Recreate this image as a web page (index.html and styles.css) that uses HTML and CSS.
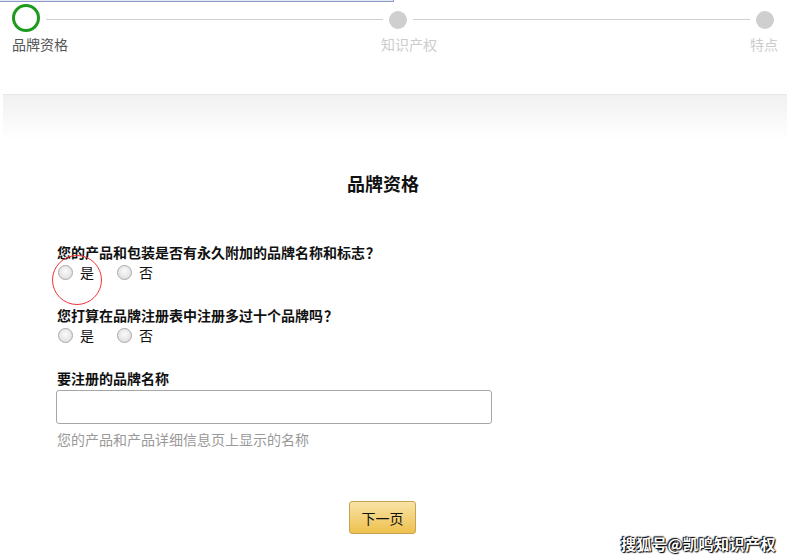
FILE: index.html
```html
<!DOCTYPE html>
<html lang="zh">
<head>
    <meta charset="UTF-8">
    <title>品牌资格</title>
    <link rel="stylesheet" href="styles.css">
</head>
<body>
    <div class="top-tab"></div>

    <!-- Steps -->
    <div class="steps">
        <div class="step-track">
            <span class="step-dot current"></span>
            <span class="step-line"></span>
            <span class="step-dot"></span>
            <span class="step-line"></span>
            <span class="step-dot"></span>
        </div>
        <div class="step-labels">
            <span class="step-label current">品牌资格</span>
            <span class="step-label">知识产权</span>
            <span class="step-label">特点</span>
        </div>
    </div>

    <div class="fade-band"></div>

    <div class="form">
        <h1 class="form-title">品牌资格</h1>

        <div class="form-body">
            <div class="question">
                <p class="question-text">您的产品和包装是否有永久附加的品牌名称和标志<span class="qmark">？</span></p>
                <div class="options">
                    <label class="option"><input type="radio" name="q1"> 是</label>
                    <label class="option"><input type="radio" name="q1"> 否</label>
                    <span class="mark"></span>
                </div>
            </div>

            <div class="question">
                <p class="question-text">您打算在品牌注册表中注册多过十个品牌吗<span class="qmark">？</span></p>
                <div class="options">
                    <label class="option"><input type="radio" name="q2"> 是</label>
                    <label class="option"><input type="radio" name="q2"> 否</label>
                </div>
            </div>

            <div class="field">
                <p class="question-text">要注册的品牌名称</p>
                <input type="text" class="text-input">
                <p class="hint">您的产品和产品详细信息页上显示的名称</p>
            </div>

            <div class="actions">
                <button class="next-btn">下一页</button>
            </div>
        </div>
    </div>

    <div class="watermark">搜狐号@凯鸣知识产权</div>
</body>
</html>
```

FILE: styles.css
```css
* {
    margin: 0;
    padding: 0;
    box-sizing: border-box;
}

body {
    font-family: "Noto Sans CJK SC", "Liberation Sans", sans-serif;
    background-color: #fff;
    color: #111;
    width: 790px;
    height: 560px;
    overflow: hidden;
    position: relative;
}

.top-tab {
    position: absolute;
    top: -10px;
    left: -1px;
    width: 395px;
    height: 12px;
    border: 1px solid #8a9cc4;
    background-color: #e4e9f4;
}

/* Steps */
.steps {
    padding: 3px 16px 0 12px;
    height: 94px;
}

.step-track {
    display: flex;
    align-items: center;
    height: 30px;
}

.step-dot {
    width: 18px;
    height: 18px;
    border-radius: 50%;
    background-color: #cfcfcf;
    flex-shrink: 0;
    margin-top: 3px;
}

.step-dot.current {
    width: 28px;
    height: 28px;
    margin-top: 0;
    border: 3px solid #1e9a1e;
    background-color: #fff;
}

.step-line {
    flex-grow: 1;
    height: 1px;
    background-color: #cfcfcf;
    margin: 2px 6px 0 6px;
}

.step-labels {
    display: flex;
    justify-content: space-between;
    margin-top: 1px;
    margin-right: -4px;
}

.step-label {
    font-size: 14px;
    line-height: 20px;
    color: #ccc;
}

.step-label.current {
    color: #555;
}

.fade-band {
    margin: 0 3px;
    height: 46px;
    border-top: 1px solid #e6e6e6;
    background: linear-gradient(#f1f1f1, #fff);
}

/* Form */
.form {
    padding-top: 30px;
}

.form-title {
    text-align: center;
    font-size: 18px;
    line-height: 26px;
    font-weight: bold;
    padding-right: 24px;
    margin-bottom: 46px;
}

.form-body {
    padding-left: 57px;
}

.question {
    margin-bottom: 23px;
}

.question-text {
    font-size: 14px;
    font-weight: bold;
    line-height: 20px;
    color: #111;
}

.qmark {
    display: inline-block;
    width: 14px;
    margin-left: 1px;
    text-align: center;
}

.options {
    display: flex;
    gap: 22px;
    position: relative;
}

.option {
    display: flex;
    align-items: center;
    gap: 7px;
    font-size: 14px;
    line-height: 20px;
}

.option input {
    appearance: none;
    width: 15px;
    height: 15px;
    margin-left: 1px;
    border-radius: 50%;
    border: 1px solid #a8a8a8;
    background: radial-gradient(circle at 50% 40%, #fafafa, #d8d8d8);
}

.mark {
    position: absolute;
    left: -5px;
    top: -7px;
    width: 50px;
    height: 50px;
    border: 1px solid #e33;
    border-radius: 50%;
}

.text-input {
    display: block;
    width: 436px;
    height: 34px;
    margin: 2px 0 0 -1px;
    border: 1px solid #a6a6a6;
    border-radius: 3px;
}

.hint {
    font-size: 14px;
    line-height: 20px;
    color: #999;
    margin-top: 5px;
}

.actions {
    margin-top: 52px;
    padding-left: 292px;
}

.next-btn {
    width: 67px;
    height: 33px;
    font-family: inherit;
    font-size: 14px;
    color: #111;
    border: 1px solid #c8a352;
    border-radius: 3px;
    background: linear-gradient(#f8e2a6, #eec14e);
    cursor: pointer;
}

.watermark {
    position: absolute;
    right: 14px;
    bottom: 6px;
    font-size: 15px;
    font-weight: bold;
    letter-spacing: 0.5px;
    color: #fff;
    text-shadow: 0 0 2px #000, 1px 1px 1px #000, -1px -1px 1px #000;
}
```
